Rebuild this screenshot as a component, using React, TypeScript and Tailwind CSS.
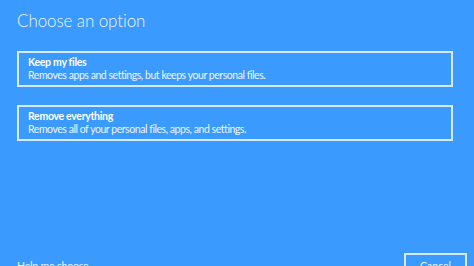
import React from 'react';

const OPTIONS = [
  { title: 'Keep my files', desc: 'Removes apps and settings, but keeps your personal files.' },
  { title: 'Remove everything', desc: 'Removes all of your personal files, apps, and settings.' },
];

export default function App() {
  return (
    <div
      className="relative h-[266px] w-[474px] overflow-hidden bg-[#3a9afd] text-white"
      style={{ fontFamily: 'Lato, "Open Sans", sans-serif' }}
    >
      <div className="flex flex-col pl-[17px] pr-[21px] pt-[8px]">
        {/* Header */}
        <h1 className="text-[17px] font-light leading-[26px] tracking-[-0.1px] text-white/95">Choose an option</h1>

        {/* Options */}
        <div className="mt-[17px] flex flex-col gap-[18px]">
          {OPTIONS.map(opt => (
            <button
              key={opt.title}
              className="flex h-[36px] flex-col justify-center border-2 border-[#d6eaff] px-[9px] text-left"
            >
              <span className="text-[10.5px] font-bold leading-[13px] tracking-[-0.3px]">{opt.title}</span>
              <span className="text-[10.5px] leading-[13px] tracking-[-0.45px] text-white/90">{opt.desc}</span>
            </button>
          ))}
        </div>
      </div>

      {/* Footer */}
      <div className="absolute bottom-[-14px] left-[17px] right-[7px] flex items-end justify-between">
        <span className="pb-[5px] text-[10.5px] tracking-[-0.2px] text-white/90">Help me choose</span>
        <button className="h-[27px] w-[63px] border-2 border-[#d6eaff] text-[10.5px] text-white/90">Cancel</button>
      </div>
    </div>
  );
}
